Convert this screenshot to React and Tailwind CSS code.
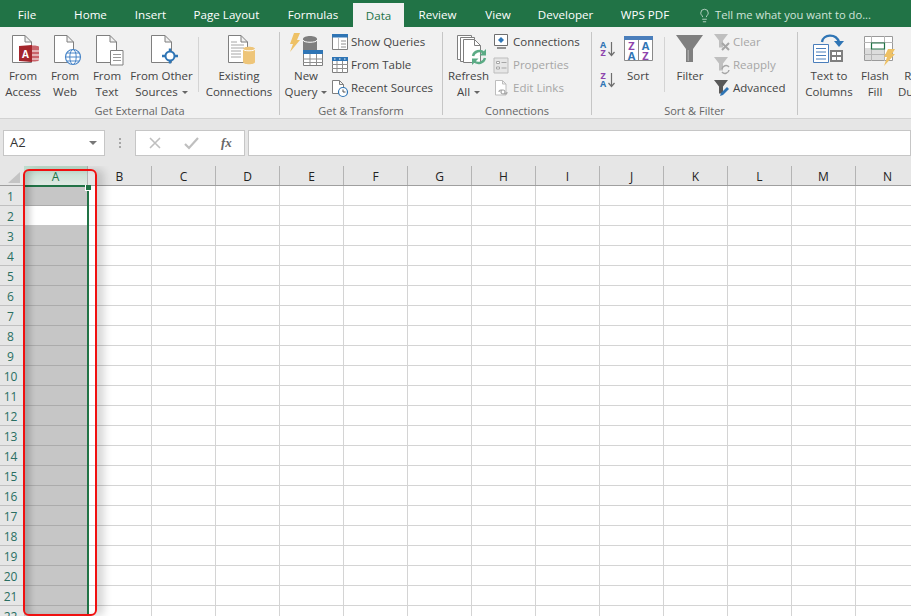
import { Lightbulb } from "lucide-react"

const font = { fontFamily: '"Open Sans", "Noto Sans", sans-serif' }

const tabs = [
  { name: "Home", w: "w-[61px]" },
  { name: "Insert", w: "w-[59px]" },
  { name: "Page Layout", w: "w-[93px]" },
  { name: "Formulas", w: "w-[80px]" },
  { name: "Data", w: "w-[51px]", active: true },
  { name: "Review", w: "w-[67px]" },
  { name: "View", w: "w-[54px]" },
  { name: "Developer", w: "w-[81px]" },
  { name: "WPS PDF", w: "w-[78px]" },
]

const columns = ["A", "B", "C", "D", "E", "F", "G", "H", "I", "J", "K", "L", "M", "N"]
const rows = Array.from({ length: 22 }, (_, i) => i + 1)

const Doc = ({ x = 9, y = 3, w = 20, h = 28, stroke = "#7f7f7f" }) => (
  <path
    d={`M${x + 0.5} ${y + 0.5}H${x + w - 7}L${x + w - 0.5} ${y + 7}V${y + h - 0.5}H${x + 0.5}ZM${x + w - 7} ${y + 0.5}V${y + 7}H${x + w - 0.5}`}
    fill="#fff"
    stroke={stroke}
  />
)

const Big = ({ children }) => (
  <svg width="40" height="36" viewBox="0 0 40 36" className="block mx-auto">
    {children}
  </svg>
)

const AccessIcon = () => (
  <Big>
    <Doc />
    <path d="M24 15c0-2 12-2 12 0v13c0 2-12 2-12 0z" fill="#c9646b" />
    <path d="M26 19h10M26 23h10M26 27h10" stroke="#fff" strokeWidth="1" />
    <path d="M16 14l13-1v17l-13-1z" fill="#a4262c" />
    <text x="19" y="26" fontSize="10" fontWeight="700" fill="#fff" fontFamily="Open Sans">A</text>
  </Big>
)

const WebIcon = () => (
  <Big>
    <Doc />
    <circle cx="28" cy="25" r="7.5" fill="#fff" stroke="#4a86c8" strokeWidth="1.2" />
    <ellipse cx="28" cy="25" rx="3.2" ry="7.5" fill="none" stroke="#4a86c8" />
    <path d="M20.5 25h15M21.5 21h13M21.5 29h13" stroke="#4a86c8" />
  </Big>
)

const TextIcon = () => (
  <Big>
    <Doc w={21} />
    <path d="M23.500 18.500h12.500v14.500H23.500z" fill="#fff" stroke="#7f7f7f" />
    <path d="M26 22.500h8M26 25.500h8M26 28.500h8" stroke="#9a9a9a" />
  </Big>
)

const OtherIcon = () => (
  <Big>
    <Doc w={21} />
    <circle cx="28" cy="24" r="4.500" fill="#fff" stroke="#2f75b5" strokeWidth="2" />
    <path d="M28 16.500v3.500M28 28v3.500M20 24h3.500M32.500 24H36" stroke="#2f75b5" strokeWidth="2.400" />
  </Big>
)

const ExistingIcon = () => (
  <Big>
    <Doc />
    <path d="M12 10h6M12 13h13M12 16h13M12 19h10M12 22h10M12 25h10" stroke="#a6a6a6" />
    <path d="M24 17c0-3 12-3 12 0v13c0 3-12 3-12 0z" fill="#eec579" />
    <path d="M24 17c0 2.400 12 2.400 12 0" fill="none" stroke="#fff" />
  </Big>
)

const QueryIcon = () => (
  <Big>
    <path d="M8 1h6l-3 7h3L4 20l3-8H4z" fill="#eec165" />
    <path d="M17 7c0-4 14-4 14 0v13H17z" fill="#7f7f7f" />
    <path d="M17 8c0 3 14 3 14 0" fill="none" stroke="#fff" />
    <path d="M17.500 18.500h19v15h-19z" fill="#fff" stroke="#7f7f7f" />
    <path d="M17 18h20v4H17z" fill="#2f75b5" />
    <path d="M17 27h20M17 30.500h20M24 22v11M30.500 22v11" stroke="#8f8f8f" />
  </Big>
)

const RefreshIcon = () => (
  <Big>
    <path d="M8.500 3.500h14v24h-14z" fill="#fff" stroke="#7f7f7f" />
    <path d="M11.500 5.500h14v24h-14z" fill="#fff" stroke="#7f7f7f" />
    <path d="M14.500 7.500h11l6 6v17h-17z" fill="#fff" stroke="#7f7f7f" />
    <path d="M25.500 7.500v6h6" fill="none" stroke="#7f7f7f" />
    <path d="M24 24a6.500 6.500 0 0 1 11-3" fill="none" stroke="#5bab85" strokeWidth="2.400" />
    <path d="M36 26a6.500 6.500 0 0 1-11 3" fill="none" stroke="#5bab85" strokeWidth="2.400" />
    <path d="M37 17v6.500h-6.500zM23 33v-6.500h6.500z" fill="#5bab85" />
  </Big>
)

const SortIcon = () => (
  <Big>
    <path d="M6.500 4.500h28v24h-28z" fill="#fff" stroke="#8a8a8a" />
    <path d="M6 4h29v4H6z" fill="#4a7ebb" />
    <path d="M20.500 8v20" stroke="#8a8a8a" />
    <g fontSize="11" fontWeight="700" fontFamily="Open Sans" textAnchor="middle">
      <text x="13.500" y="18" fill="#8e44ad">Z</text>
      <text x="13.500" y="28" fill="#2f75b5">A</text>
      <text x="27.500" y="18" fill="#2f75b5">A</text>
      <text x="27.500" y="28" fill="#8e44ad">Z</text>
    </g>
  </Big>
)

const FilterIcon = () => (
  <Big>
    <path d="M6 3h27L23 17v13h-7V17z" fill="#7f7f7f" />
    <path d="M17.500 18h1.500v11h-1.500z" fill="#a6a6a6" />
  </Big>
)

const ColumnsIcon = () => (
  <Big>
    <path d="M4.500 12.500h15v18h-15z" fill="#fff" stroke="#4a7ebb" />
    <path d="M7 16.500h10M7 20h10M7 23.500h10M7 27h10" stroke="#4a7ebb" />
    <path d="M21 18h13v12H21z" fill="#7f7f7f" />
    <path d="M23 20h4v3h-4zM28 20h4v3h-4zM23 25h4v3h-4zM28 25h4v3h-4z" fill="#fff" />
    <path d="M13 10c1-8 14-9 17 0" fill="none" stroke="#2f75b5" strokeWidth="2.400" />
    <path d="M25 9h10l-5 6z" fill="#2f75b5" />
  </Big>
)

const FlashIcon = () => (
  <Big>
    <path d="M7.500 4.500h28v24h-28z" fill="#fff" stroke="#9a9a9a" />
    <path d="M8 16h20v12H8z" fill="#dcdcdc" />
    <path d="M14.500 4v25M27.500 4v25M7 10.500h29M7 22.500h29" stroke="#b5b5b5" />
    <path d="M14.500 11h13v6h-13z" fill="#fff" stroke="#217346" strokeWidth="1.200" />
    <path d="M31 17h7l-3 5h3L27 34l3-9h-3z" fill="#eec165" />
  </Big>
)

const Small = ({ children }) => (
  <svg width="18" height="18" viewBox="0 0 18 18" className="shrink-0">
    {children}
  </svg>
)

const ShowQueries = () => (
  <Small>
    <path d="M1.500 .5h15v15h-15z" fill="#fff" stroke="#7f7f7f" />
    <path d="M1 0h16v3.500H1z" fill="#2f75b5" />
    <path d="M10 7h5M10 10h5M10 13h5" stroke="#8f8f8f" />
    <path d="M7.500 4v11" stroke="#bdbdbd" />
  </Small>
)

const FromTable = () => (
  <Small>
    <path d="M1.500 .5h15v15h-15z" fill="#fff" stroke="#7f7f7f" />
    <path d="M1 0h16v4H1z" fill="#2f75b5" />
    <path d="M1 7.500h16M1 11.500h16M6 4v12M11.500 4v12" stroke="#8f8f8f" />
    <path d="M3 2h1.500M8 2h1.500M13 2h1.500" stroke="#fff" />
  </Small>
)

const RecentSources = () => (
  <Small>
    <path d="M1.500 .5h7l4 4v9h-11zM8.500 .5v4h4" fill="#fff" stroke="#7f7f7f" />
    <circle cx="12" cy="12" r="4.500" fill="#fff" stroke="#2f75b5" strokeWidth="1.200" />
    <path d="M12 9.500V12h2.500" fill="none" stroke="#555" />
  </Small>
)

const ConnectionsIcon = () => (
  <Small>
    <path d="M1.500 .5h13v11h-13z" fill="#fff" stroke="#6e6e6e" />
    <path d="M8 3l3 3-3 3-3-3z" fill="#2f75b5" />
    <path d="M4 14h9" stroke="#6e6e6e" strokeWidth="1.500" />
  </Small>
)

const PropertiesIcon = () => (
  <Small>
    <path d="M1 1h14v15H1z" fill="#e6e6e6" stroke="#bdbdbd" />
    <path d="M3.500 4.500h3v2h-3zM3.500 10h3v2h-3z" fill="#fff" stroke="#a6a6a6" />
    <path d="M8.500 5.500h5M8.500 11h5" stroke="#a6a6a6" />
  </Small>
)

const EditLinksIcon = () => (
  <Small>
    <path d="M2.500 .5h7l3.500 3.500v11h-10.500zM9.500 .5v3.500h3.500" fill="#fff" stroke="#bdbdbd" />
    <path d="M6 12a2 2 0 0 1 2-2h2a2 2 0 0 1 0 4M14 12a2 2 0 0 1-2 2h-2a2 2 0 0 1 0-4" fill="none" stroke="#a6a6a6" strokeWidth="1.200" />
  </Small>
)

const ClearIcon = () => (
  <Small>
    <path d="M1 0h14l-5 6.500v7h-4v-7z" fill="#bfbfbf" />
    <path d="M9 9l7 7M16 9l-7 7" stroke="#a6a6a6" strokeWidth="2" />
  </Small>
)

const ReapplyIcon = () => (
  <Small>
    <path d="M1 0h14l-5 6.500v7h-4v-7z" fill="#bfbfbf" />
    <path d="M9 12a4 4 0 0 1 7-2M16 13a4 4 0 0 1-7 2" fill="none" stroke="#a6a6a6" strokeWidth="1.500" />
  </Small>
)

const AdvancedIcon = () => (
  <Small>
    <path d="M1 0h14l-5 6.500v7h-4v-7z" fill="#595959" />
    <path d="M7 16l1-3 6-6 2 2-6 6z" fill="#2f75b5" />
  </Small>
)

const SortAZ = ({ top, bottom, topColor, bottomColor }) => (
  <svg width="18" height="18" viewBox="0 0 18 18" className="block">
    <g fontSize="9" fontWeight="700" fontFamily="Open Sans" textAnchor="middle">
      <text x="5" y="8" fill={topColor}>{top}</text>
      <text x="5" y="16" fill={bottomColor}>{bottom}</text>
    </g>
    <path d="M13.500 2v13M10.500 12l3 3.500 3-3.500" fill="none" stroke="#6e6e6e" strokeWidth="1.200" />
  </svg>
)

const Caret = () => (
  <span className="inline-block ml-[4px] align-middle w-0 h-0 border-x-[3px] border-x-transparent border-t-[3px] border-t-[#666]" />
)

const BigButton = ({ icon, lines, caret, w }) => (
  <div className={`${w} shrink-0 pt-px text-center`}>
    {icon}
    <div className="text-[11.5px] leading-[16px] text-[#444] whitespace-nowrap">{lines[0]}</div>
    <div className="text-[11.5px] leading-[16px] text-[#444] whitespace-nowrap">
      {lines[1]}
      {caret && <Caret />}
    </div>
  </div>
)

const SmallButton = ({ icon, label, disabled }) => (
  <div className="h-[23px] flex items-center gap-[2px] whitespace-nowrap">
    {icon}
    <span className={`text-[11.5px] mb-[2px] ${disabled ? "text-[#a6a6a6]" : "text-[#444]"}`}>{label}</span>
  </div>
)

const Group = ({ w, label, children }) => (
  <div className={`${w} shrink-0 flex flex-col`}>
    <div className="h-[77px] pt-[4px] flex">{children}</div>
    <div className="h-[14px] leading-[14px] text-[11px] text-center text-[#666] whitespace-nowrap">{label}</div>
  </div>
)

const GroupSep = () => <div className="w-px h-[83px] mt-[5px] bg-[#c6c6c6] shrink-0" />
const InnerSep = () => <div className="w-px h-[55px] mt-[6px] bg-[#d4d4d4] shrink-0" />

export default function App() {
  return (
    <div className="w-[911px] h-[616px] overflow-hidden bg-white flex flex-col" style={font}>
      {/* tabs */}
      <div className="h-[27px] bg-[#217346] flex shrink-0 text-[11.6px] text-white">
        <div className="w-[54px] mr-[6px] leading-[30px] text-center">File</div>
        {tabs.map((t) => (
          <div
            key={t.name}
            className={`${t.w} text-center ${t.active ? "mt-[3px] h-[24px] leading-[25px] bg-[#f1f1f1] text-[#217346]" : "leading-[30px]"}`}
          >
            {t.name}
          </div>
        ))}
        <div className="ml-[13px] flex items-center gap-[3px] pt-[3px] text-[11.2px] text-[#cfe3d8]">
          <Lightbulb size={15} strokeWidth={1.3} />
          <span>Tell me what you want to do...</span>
        </div>
      </div>

      {/* ribbon */}
      <div className="h-[92px] bg-[#f1f1f1] border-b border-[#d2d2d2] flex shrink-0">
        <Group w="w-[279px]" label="Get External Data">
          <div className="w-[2px]" />
          <BigButton w="w-[42px]" icon={<AccessIcon />} lines={["From", "Access"]} />
          <BigButton w="w-[42px]" icon={<WebIcon />} lines={["From", "Web"]} />
          <BigButton w="w-[42px]" icon={<TextIcon />} lines={["From", "Text"]} />
          <BigButton w="w-[67px]" icon={<OtherIcon />} lines={["From Other", "Sources"]} caret />
          <div className="w-[3px]" />
          <InnerSep />
          <div className="w-[5px]" />
          <BigButton w="w-[70px]" icon={<ExistingIcon />} lines={["Existing", "Connections"]} />
        </Group>
        <GroupSep />
        <Group w="w-[162px]" label="Get & Transform">
          <div className="w-px" />
          <BigButton w="w-[50px]" icon={<QueryIcon />} lines={["New", "Query"]} caret />
          <div>
            <SmallButton icon={<ShowQueries />} label="Show Queries" />
            <SmallButton icon={<FromTable />} label="From Table" />
            <SmallButton icon={<RecentSources />} label="Recent Sources" />
          </div>
        </Group>
        <GroupSep />
        <Group w="w-[148px]" label="Connections">
          <div className="w-[4px]" />
          <BigButton w="w-[43px]" icon={<RefreshIcon />} lines={["Refresh", "All"]} caret />
          <div className="w-[3px]" />
          <div>
            <SmallButton icon={<ConnectionsIcon />} label="Connections" />
            <SmallButton icon={<PropertiesIcon />} label="Properties" disabled />
            <SmallButton icon={<EditLinksIcon />} label="Edit Links" disabled />
          </div>
        </Group>
        <GroupSep />
        <Group w="w-[205px]" label="Sort & Filter">
          <div className="w-[6px]" />
          <div className="w-[19px] pt-[9px] flex flex-col gap-[13px]">
            <SortAZ top="A" bottom="Z" topColor="#2f75b5" bottomColor="#8e44ad" />
            <SortAZ top="Z" bottom="A" topColor="#8e44ad" bottomColor="#2f75b5" />
          </div>
          <BigButton w="w-[42px]" icon={<SortIcon />} lines={["Sort", ""]} />
          <div className="w-[5px]" />
          <InnerSep />
          <div className="w-[3px]" />
          <BigButton w="w-[44px]" icon={<FilterIcon />} lines={["Filter", ""]} />
          <div className="w-px" />
          <div>
            <SmallButton icon={<ClearIcon />} label="Clear" disabled />
            <SmallButton icon={<ReapplyIcon />} label="Reapply" disabled />
            <SmallButton icon={<AdvancedIcon />} label="Advanced" />
          </div>
        </Group>
        <GroupSep />
        <div className="h-[77px] pt-[4px] flex">
          <div className="w-[3px]" />
          <BigButton w="w-[56px]" icon={<ColumnsIcon />} lines={["Text to", "Columns"]} />
          <BigButton w="w-[36px]" icon={<FlashIcon />} lines={["Flash", "Fill"]} />
          <BigButton w="w-[60px] ml-[3px]" icon={<Big />} lines={["Remove", "Duplicates"]} />
        </div>
      </div>

      {/* name box and formula bar */}
      <div className="h-[47px] bg-[#e6e6e6] flex shrink-0 pt-[11px] pl-[3px]">
        <div className="w-[102px] h-[26px] bg-white border border-[#c6c6c6] flex items-center justify-between pl-[6px] pr-[7px]">
          <span className="text-[13px] text-[#333]">A2</span>
          <span className="w-0 h-0 border-x-[4px] border-x-transparent border-t-[4px] border-t-[#777]" />
        </div>
        <div className="w-[30px] flex flex-col items-center justify-center gap-[2px] h-[26px]">
          <span className="w-[2px] h-[2px] bg-[#a6a6a6]" />
          <span className="w-[2px] h-[2px] bg-[#a6a6a6]" />
          <span className="w-[2px] h-[2px] bg-[#a6a6a6]" />
        </div>
        <div className="w-[110px] h-[26px] bg-white border border-[#c6c6c6] flex items-center">
          <svg width="108" height="24" viewBox="0 0 108 24">
            <path d="M14 7l10 10M24 7L14 17" stroke="#bfbfbf" strokeWidth="1.600" />
            <path d="M49 13l4 4 9-10" fill="none" stroke="#bfbfbf" strokeWidth="2.200" />
            <text x="85" y="16" fontSize="13" fontStyle="italic" fontWeight="700" fontFamily="Liberation Serif" fill="#666">fx</text>
          </svg>
        </div>
        <div className="ml-[3px] flex-1 h-[26px] bg-white border border-[#c6c6c6]" />
      </div>

      {/* sheet */}
      <div className="relative flex-1 overflow-hidden">
        <div className="h-[20px] flex bg-[#e6e6e6] border-b border-[#9f9f9f]">
          <div className="w-[24px] shrink-0 relative">
            <svg width="13" height="11" viewBox="0 0 13 11" className="absolute left-[8px] top-[6px]">
              <path d="M12 0v11H0z" fill="#c4c4c4" />
            </svg>
          </div>
          {columns.map((c) => (
            <div
              key={c}
              className={`w-[64px] shrink-0 text-center text-[12px] leading-[21px] border-r border-[#b4b4b4] ${c === "A" ? "bg-gradient-to-b from-[#bcdccb] to-[#dfe9e3] text-[#217346]" : "text-[#222]"}`}
            >
              {c}
            </div>
          ))}
        </div>
        {rows.map((r) => (
          <div key={r} className="h-[20px] flex">
            <div className="w-[24px] shrink-0 bg-[#e6e6e6] border-b border-[#c0c0c0] text-[12px] leading-[21px] text-center pr-[3px] text-[#2a6f62]">
              {r}
            </div>
            {columns.map((c) => (
              <div
                key={c}
                className={`w-[64px] shrink-0 border-b border-r ${c === "A" ? (r === 2 ? "bg-white border-[#c6c6c6]" : "bg-[#c6c6c6] border-[#ababab]") : "border-[#d4d4d4]"}`}
              />
            ))}
          </div>
        ))}

        {/* selection outline */}
        <div className="absolute left-[23px] top-[19px] w-[66px] h-[2px] bg-[#217346]" />
        <div className="absolute left-[87px] top-[19px] w-[2px] h-[440px] bg-[#217346]" />
        <div className="absolute left-[85px] top-[19px] w-[6px] h-[6px] bg-[#217346] border-l border-b border-white" />

        {/* red callout */}
        <div className="absolute left-[23px] top-[3px] w-[74px] h-[447px] rounded-[6px] border-2 border-[#f01010] shadow-[7px_0_8px_rgba(0,0,0,0.16),inset_7px_0_6px_-2px_rgba(0,0,0,0.18)]" />
      </div>
    </div>
  )
}
